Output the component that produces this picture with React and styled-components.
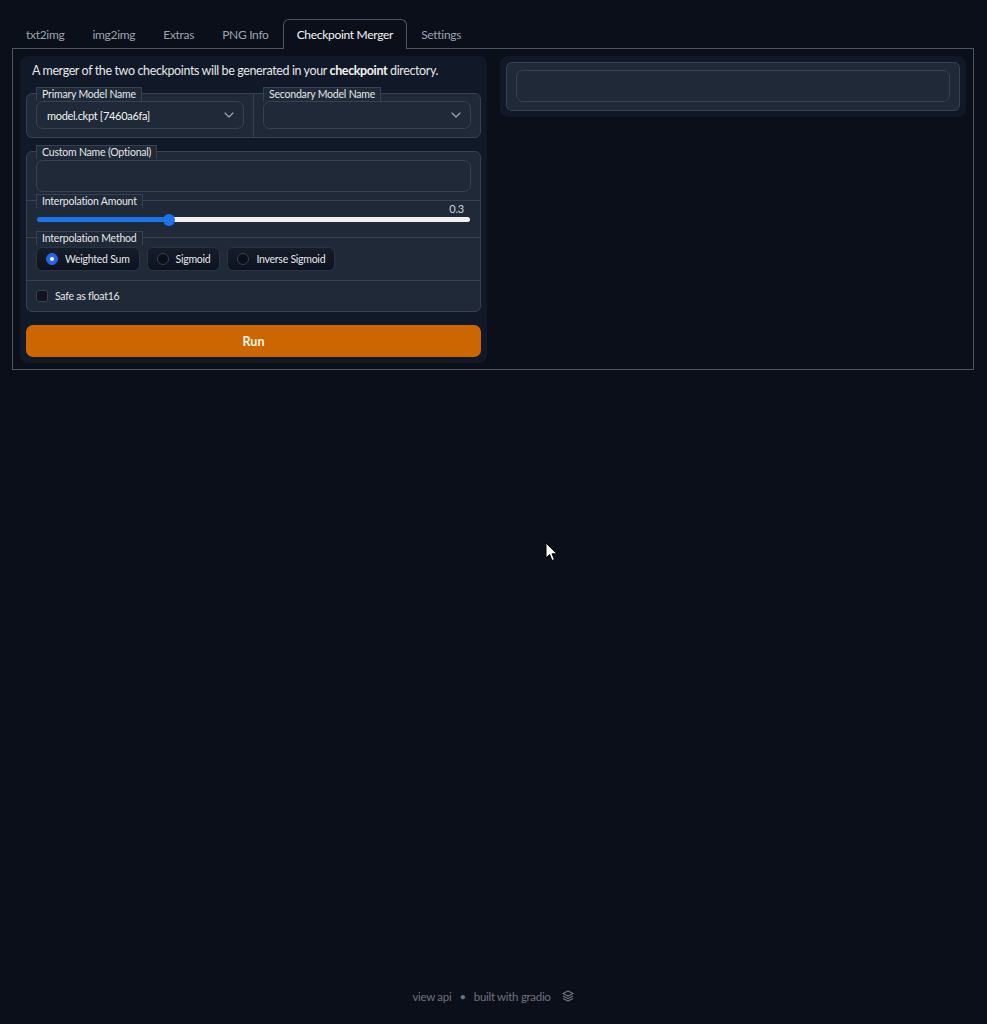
import React from 'react';
import styled, { createGlobalStyle } from 'styled-components';

const GlobalStyle = createGlobalStyle`
  html, body {
    margin: 0;
    padding: 0;
    background: #0b0f19;
  }
  body {
    font-family: Lato, "Noto Sans", "Liberation Sans", sans-serif;
    font-size: 12px;
    letter-spacing: -0.2px;
    color: #e5e7eb;
  }
  * { box-sizing: border-box; }
`;

const Page = styled.div`
  min-height: 1024px;
  display: flex;
  flex-direction: column;
  padding: 19px 13px 0 12px;
  position: relative;
`;

const TabBar = styled.div`
  display: flex;
  height: 29px;
  position: relative;
  z-index: 1;
`;

const Tab = styled.div`
  padding: 0 13px;
  display: flex;
  align-items: center;
  font-size: 12px;
  letter-spacing: -0.3px;
  color: ${p => (p.$active ? '#f3f4f6' : '#9ca3af')};
  border: 1px solid ${p => (p.$active ? '#4b5563' : 'transparent')};
  border-bottom: none;
  border-radius: 6px 6px 0 0;
  background: ${p => (p.$active ? '#0b0f19' : 'transparent')};
  height: ${p => (p.$active ? '30px' : '29px')};
`;

const Panel = styled.div`
  border: 1px solid #4b5563;
  padding: 7px 7px 6px 7px;
  display: grid;
  grid-template-columns: 467px 466px;
  column-gap: 13px;
  align-items: start;
`;

const Column = styled.div`
  background: #111827;
  border-radius: 8px;
  padding: 6px;
  display: flex;
  flex-direction: column;
  gap: 13px;
`;

const Intro = styled.div`
  height: 18px;
  line-height: 18px;
  padding-left: 6px;
  font-size: 12.5px;
  letter-spacing: -0.38px;
  color: #e5e7eb;
  white-space: nowrap;
  b { font-weight: 700; color: #f3f4f6; }
`;

const Block = styled.div`
  background: #1f2937;
  border: 1px solid #374151;
  border-radius: 6px;
  display: ${p => (p.$row ? 'flex' : 'block')};
`;

const Half = styled.div`
  flex: 1;
  position: relative;
  padding: 7px 9px 8px 9px;
  & + & { border-left: 1px solid #374151; }
`;

const Section = styled.div`
  position: relative;
  padding: ${p => p.$pad || '8px 9px'};
  & + & { border-top: 1px solid #374151; }
`;

const FieldLabel = styled.span`
  position: absolute;
  top: -7px;
  left: 9px;
  background: #1f2937;
  border: 1px solid #374151;
  border-bottom: none;
  padding: 0 5px;
  height: 14px;
  line-height: 13px;
  font-size: 10.5px;
  letter-spacing: -0.2px;
  color: #e5e7eb;
  white-space: nowrap;
`;

const Select = styled.div`
  height: 28px;
  border: 1px solid #374151;
  border-radius: 7px;
  background: #1f2937;
  display: flex;
  align-items: center;
  justify-content: space-between;
  padding: 0 9px 0 10px;
  font-size: 11px;
  letter-spacing: -0.3px;
  color: #f3f4f6;
`;

const TextInput = styled.div`
  height: 32px;
  border: 1px solid #374151;
  border-radius: 7px;
  background: #1f2937;
`;

const SliderTop = styled.div`
  display: flex;
  justify-content: flex-end;
  height: 11px;
  line-height: 11px;
  font-size: 11px;
  color: #d1d5db;
  padding-right: 6px;
`;

const Track = styled.div`
  position: relative;
  height: 5px;
  margin: 3px 0 0 0;
  border-radius: 3px;
  background: linear-gradient(to right, #1a73e8 0%, #1a73e8 30%, #f0f0f0 30%, #f0f0f0 100%);
`;

const Thumb = styled.div`
  position: absolute;
  top: 50%;
  width: 12px;
  height: 12px;
  border-radius: 50%;
  background: #1a73e8;
  transform: translate(-50%, -50%);
`;

const RadioRow = styled.div`
  display: flex;
  gap: 7px;
`;

const RadioItem = styled.div`
  height: 24px;
  display: flex;
  align-items: center;
  gap: 7px;
  padding: 0 9px;
  border: 1px solid #2b3442;
  border-radius: 6px;
  background: linear-gradient(to bottom, #151c2a, #0d1220);
  font-size: 10.5px;
  letter-spacing: -0.25px;
  color: #e5e7eb;
`;

const RadioDot = styled.span`
  width: 12px;
  height: 12px;
  border-radius: 50%;
  flex: none;
  background: ${p => (p.$on ? '#2563eb' : '#0b0f19')};
  border: 1px solid ${p => (p.$on ? '#2563eb' : '#374151')};
  display: flex;
  align-items: center;
  justify-content: center;
  &::after {
    content: '';
    width: 4px;
    height: 4px;
    border-radius: 50%;
    background: ${p => (p.$on ? '#ffffff' : 'transparent')};
  }
`;

const CheckRow = styled.label`
  display: flex;
  align-items: center;
  gap: 7px;
  height: 12px;
  font-size: 10.5px;
  letter-spacing: -0.25px;
  color: #e5e7eb;
`;

const CheckBox = styled.span`
  width: 12px;
  height: 12px;
  border-radius: 3px;
  border: 1px solid #374151;
  background: #0f1420;
`;

const RunButton = styled.button`
  height: 32px;
  border: none;
  border-radius: 7px;
  background: #cc6600;
  color: #fff7ed;
  font-family: inherit;
  font-size: 12.5px;
  font-weight: 700;
  cursor: pointer;
`;

const Footer = styled.div`
  margin-top: auto;
  height: 16px;
  margin-bottom: 20px;
  display: flex;
  justify-content: center;
  align-items: center;
  gap: 8px;
  padding-left: 0;
  font-size: 11.5px;
  letter-spacing: -0.3px;
  color: #6b7280;
  svg { margin-left: 3px; }
`;

const Cursor = styled.svg`
  position: absolute;
  left: 545px;
  top: 542px;
`;

const Chevron = () => (
  <svg width="10" height="6" viewBox="0 0 10 6" fill="none" stroke="#9ca3af" strokeWidth="1.2" strokeLinecap="round" strokeLinejoin="round">
    <polyline points="1 1 5 5 9 1" />
  </svg>
);

const GradioLogo = () => (
  <svg width="12" height="12" viewBox="0 0 12 12" fill="none" stroke="#6b7280" strokeWidth="1.3" strokeLinejoin="round">
    <path d="M6 1 L11 3.5 L6 6 L1 3.5 Z" />
    <path d="M1 6 L6 8.5 L11 6" />
    <path d="M1 8.5 L6 11 L11 8.5" />
  </svg>
);

const tabs = ['txt2img', 'img2img', 'Extras', 'PNG Info', 'Checkpoint Merger', 'Settings'];
const methods = ['Weighted Sum', 'Sigmoid', 'Inverse Sigmoid'];

export default function App() {
  const amount = 0.3;
  return (
    <Page>
      <GlobalStyle />
      <TabBar>
        {tabs.map(t => (
          <Tab key={t} $active={t === 'Checkpoint Merger'}>{t}</Tab>
        ))}
      </TabBar>
      <Panel>
        <Column>
          <Intro>
            A merger of the two checkpoints will be generated in your <b>checkpoint</b> directory.
          </Intro>
          <Block $row>
            <Half>
              <FieldLabel>Primary Model Name</FieldLabel>
              <Select>
                <span>model.ckpt [7460a6fa]</span>
                <Chevron />
              </Select>
            </Half>
            <Half>
              <FieldLabel>Secondary Model Name</FieldLabel>
              <Select>
                <span />
                <Chevron />
              </Select>
            </Half>
          </Block>
          <Block>
            <Section $pad="8px 9px 8px 9px">
              <FieldLabel>Custom Name (Optional)</FieldLabel>
              <TextInput />
            </Section>
            <Section $pad="2px 10px 15px 10px">
              <FieldLabel>Interpolation Amount</FieldLabel>
              <SliderTop>{amount}</SliderTop>
              <Track>
                <Thumb style={{ left: `calc(6px + (100% - 12px) * ${amount})` }} />
              </Track>
            </Section>
            <Section $pad="9px 9px 9px 9px">
              <FieldLabel>Interpolation Method</FieldLabel>
              <RadioRow>
                {methods.map(m => (
                  <RadioItem key={m}>
                    <RadioDot $on={m === 'Weighted Sum'} />
                    {m}
                  </RadioItem>
                ))}
              </RadioRow>
            </Section>
            <Section $pad="9px 9px 9px 9px">
              <CheckRow>
                <CheckBox />
                Safe as float16
              </CheckRow>
            </Section>
          </Block>
          <RunButton>Run</RunButton>
        </Column>
        <Column>
          <Block>
            <Section $pad="7px 9px 8px 9px">
              <TextInput />
            </Section>
          </Block>
        </Column>
      </Panel>
      <Footer>
        <span>view api</span>
        <span>•</span>
        <span>built with gradio</span>
        <GradioLogo />
      </Footer>
      <Cursor width="14" height="21" viewBox="0 0 14 21">
        <path d="M1 1 L1 16 L4.5 12.5 L7 18.5 L9.5 17.5 L7 11.8 L12 11.8 Z" fill="#ffffff" stroke="#000000" strokeWidth="1" strokeLinejoin="round" />
      </Cursor>
    </Page>
  );
}
